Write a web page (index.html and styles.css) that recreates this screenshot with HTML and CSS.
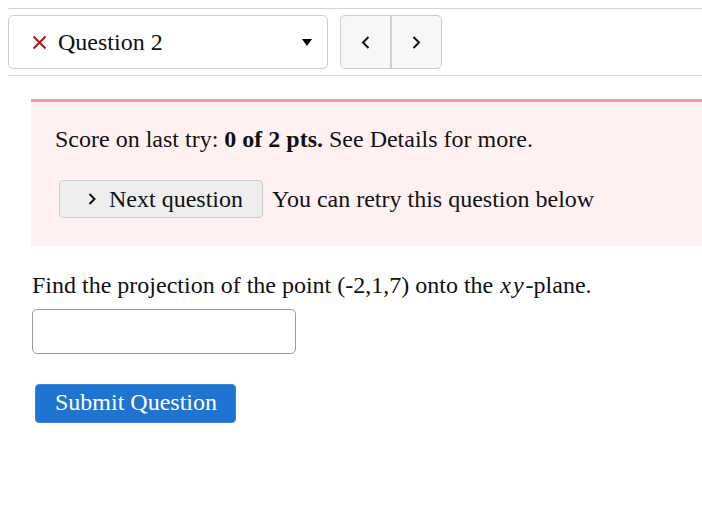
FILE: index.html
```html
<!DOCTYPE html>
<html>
<head>
<meta charset="utf-8">
<link rel="stylesheet" href="styles.css">
</head>
<body>
<div class="qnav">
  <div class="qselect">
    <svg class="xicon" width="15" height="15" viewBox="0 0 15 15"><path d="M1.5 1.5 L13.5 13.5 M13.5 1.5 L1.5 13.5" stroke="#a31b1b" stroke-width="2" fill="none"/></svg>
    <span class="qlabel">Question 2</span>
    <svg class="caret" width="10" height="7" viewBox="0 0 10 7"><path d="M0 0 H10 L5 7 Z" fill="#000"/></svg>
  </div>
  <div class="navbtns">
    <div class="navbtn"><svg width="9" height="13" viewBox="0 0 9 13"><path d="M7.5 1 L2 6.5 L7.5 12" stroke="#111" stroke-width="2" fill="none"/></svg></div>
    <div class="navbtn sep"><svg width="9" height="13" viewBox="0 0 9 13"><path d="M1.5 1 L7 6.5 L1.5 12" stroke="#111" stroke-width="2" fill="none"/></svg></div>
  </div>
</div>
<div class="main">
  <div class="alert">
    <p class="score">Score on last try: <b>0 of 2 pts.</b> See Details for more.</p>
    <div class="retryrow">
      <span class="nextbtn"><svg width="8" height="12" viewBox="0 0 8 12"><path d="M1.5 1 L6.5 6 L1.5 11" stroke="#111" stroke-width="2" fill="none"/></svg>Next question</span>
      <span class="retrytext">You can retry this question below</span>
    </div>
  </div>
  <p class="question">Find the projection of the point (-2,1,7) onto the <span class="math">xy</span>-plane.</p>
  <div class="answer"></div>
  <div class="submit">Submit Question</div>
</div>
</body>
</html>
```
FILE: styles.css
```css
html, body {
  background: #fff;
}
body {
  margin: 8px 0 0 8px;
  font-family: "Liberation Serif", "Times New Roman", serif;
  font-size: 24px;
  color: #111;
}
.qnav {
  display: flex;
  gap: 12px;
  padding: 6px 0;
  border-top: 1px solid #d4d4d4;
  border-bottom: 1px solid #d4d4d4;
}
.qselect {
  box-sizing: border-box;
  width: 320px;
  height: 54px;
  border: 1px solid #cfcfcf;
  border-radius: 5px;
  display: flex;
  align-items: center;
  padding: 0 15px 0 23px;
}
.xicon {
  flex: none;
  margin-top: 1px;
}
.qlabel {
  margin-left: 11px;
  line-height: 28px;
}
.caret {
  margin-left: auto;
}
.navbtns {
  box-sizing: border-box;
  width: 102px;
  height: 54px;
  border: 1px solid #cfcfcf;
  border-radius: 5px;
  background: #f7f7f7;
  display: flex;
}
.navbtn {
  flex: 1;
  display: flex;
  align-items: center;
  justify-content: center;
}
.navbtn.sep {
  border-left: 2px solid #cfcfcf;
}
.main {
  padding-left: 23px;
}
.alert {
  margin-top: 23px;
  border-top: 3px solid #ff9999;
  background: #fff1f1;
  padding: 23px 0 28px 24px;
}
.score {
  margin: 0;
  line-height: 28px;
}
.retryrow {
  margin-top: 27px;
  display: flex;
  align-items: center;
  line-height: 28px;
}
.nextbtn {
  box-sizing: border-box;
  margin-left: 4px;
  height: 38px;
  display: flex;
  align-items: center;
  gap: 13px;
  padding: 0 19px 0 28px;
  border: 1px solid #cccccc;
  border-radius: 4px;
  background: #eeeeee;
}
.retrytext {
  margin-left: 9px;
}
.question {
  margin: 25px 0 0 1px;
  line-height: 28px;
}
.math {
  font-style: italic;
  letter-spacing: 2px;
  padding-left: 1px;
}
.answer {
  box-sizing: border-box;
  margin-top: 10px;
  margin-left: 1px;
  width: 264px;
  height: 45px;
  border: 1px solid #9a9a9a;
  border-radius: 5px;
  background: #fff;
}
.submit {
  box-sizing: border-box;
  display: inline-block;
  margin: 30px 0 0 4px;
  height: 39px;
  padding: 3px 18px 0 19px;
  line-height: 28px;
  color: #fff;
  background: #1f74d2;
  border: 1px solid #3a86d8;
  border-radius: 4px;
}
```
